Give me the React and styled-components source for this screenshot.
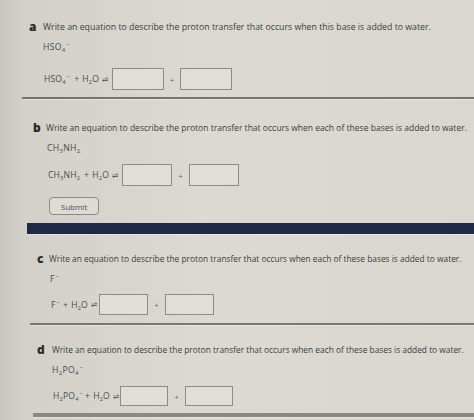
import React from "react";
import styled, { createGlobalStyle } from "styled-components";

const Global = createGlobalStyle`
  html, body { margin: 0; padding: 0; }
  body {
    width: 474px;
    height: 420px;
    overflow: hidden;
    background: linear-gradient(90deg, #c9c6c0 0px, #d3d0ca 22px, #dcd9d3 200px, #dad7d1 474px);
    font-family: "Open Sans", "Liberation Sans", sans-serif;
    color: #4b4a48;
  }
`;

const Page = styled.div`
  display: flex;
  flex-direction: column;
  padding-top: 20px;
`;

const Section = styled.section`
  display: flex;
  flex-direction: column;
  padding-left: ${(p) => p.$indent}px;
  margin-top: ${(p) => p.$top}px;
`;

const Header = styled.div`
  display: flex;
  align-items: center;
  gap: ${(p) => p.$gap}px;
  height: 14px;
`;

const Letter = styled.span`
  font-family: "Open Sans", "Liberation Sans", sans-serif;
  font-weight: 800;
  font-size: 12px;
  color: #2c2b2a;
  line-height: 14px;
  width: 8px;
`;

const Prompt = styled.span`
  font-size: ${(p) => p.$size}px;
  line-height: 14px;
  color: #3d3c3a;
  white-space: nowrap;
`;

const Formula = styled.div`
  font-size: 8.7px;
  letter-spacing: 0.3px;
  line-height: 14px;
  height: 14px;
  margin-top: 6px;
  padding-left: ${(p) => p.$shift}px;
  color: #4c4b48;
  sub { font-size: 6px; vertical-align: -2px; line-height: 0; }
  sup { font-size: 6px; vertical-align: 3px; line-height: 0; margin-left: 1px; }
`;

const EqRow = styled.div`
  display: flex;
  align-items: center;
  height: ${(p) => p.$h}px;
  margin-top: ${(p) => p.$top}px;
  padding-left: ${(p) => p.$shift}px;
  font-size: 8.6px;
  letter-spacing: 0.15px;
  color: #4c4b48;
  sub { font-size: 5.8px; vertical-align: -2px; line-height: 0; }
  sup { font-size: 5.8px; vertical-align: 3px; line-height: 0; margin-left: 1px; }
`;

const Lhs = styled.span`
  display: flex;
  align-items: center;
  white-space: nowrap;
  flex-shrink: 0;
  width: ${(p) => p.$w}px;
`;

const Op = styled.span`
  margin: 0 3px 0 ${(p) => p.$before}px;
`;

const Arrow = styled.span`
  font-family: "DejaVu Sans", sans-serif;
  font-size: 7.5px;
  letter-spacing: 0;
  margin-left: 3px;
`;

const AnswerBox = styled.div`
  width: ${(p) => p.$w}px;
  height: 100%;
  flex-shrink: 0;
  box-sizing: border-box;
  border: 1px solid #8e8c87;
  background: #e1ded9;
`;

const Plus = styled.span`
  font-size: 8px;
  width: ${(p) => p.$w}px;
  text-align: center;
  color: #6a6966;
`;

const SubmitButton = styled.button`
  margin-top: 11px;
  margin-left: 16px;
  width: 50px;
  height: 18px;
  border: 1px solid #8d8b87;
  border-radius: 4px;
  background: #dedbd5;
  font-family: "Open Sans", "Liberation Sans", sans-serif;
  font-size: 8px;
  color: #4f4e4b;
  padding: 0;
  align-self: flex-start;
`;

const Divider = styled.div`
  height: ${(p) => p.$h}px;
  margin-left: ${(p) => p.$left}px;
  margin-top: ${(p) => p.$top}px;
  background: ${(p) => p.$color};
  box-shadow: 0 1px 0 rgba(255,255,255,0.35);
`;

const Sub = ({ children }) => <sub>{children}</sub>;
const Sup = ({ children }) => <sup>{children}</sup>;

function Question({ letter, indent, gap, top, size, prompt, formula, shift, lhsW, opGap, eqTop, eqH, boxW, plusW, children }) {
  return (
    <Section $indent={indent} $top={top}>
      <Header $gap={gap}>
        <Letter>{letter}</Letter>
        <Prompt $size={size}>{prompt}</Prompt>
      </Header>
      <Formula $shift={shift}>{formula}</Formula>
      <EqRow $top={eqTop} $h={eqH} $shift={shift + 1}>
        <Lhs $w={lhsW}>
          <span>
            {formula}
            <Op $before={opGap}>+</Op>H<Sub>2</Sub>O
          </span>
          <Arrow>⇌</Arrow>
        </Lhs>
        <AnswerBox $w={boxW} />
        <Plus $w={plusW}>+</Plus>
        <AnswerBox $w={boxW} />
      </EqRow>
      {children}
    </Section>
  );
}

const single = "Write an equation to describe the proton transfer that occurs when this base is added to water.";
const many = "Write an equation to describe the proton transfer that occurs when each of these bases is added to water.";

export default function App() {
  return (
    <>
      <Global />
      <Page>
        <Question
          letter="a" indent={29} gap={6} top={0} size={8.75} prompt={single} shift={14}
          formula={<>HSO<Sub>4</Sub><Sup>−</Sup></>}
          lhsW={68} opGap={4} eqTop={14} eqH={22} boxW={52} plusW={16}
        />
        <Divider $h={2} $left={22} $top={7} $color="#77746f" />
        <Question
          letter="b" indent={33} gap={5} top={22} size={8.54} prompt={many} shift={14}
          formula={<>CH<Sub>3</Sub>NH<Sub>2</Sub></>}
          lhsW={74} opGap={4} eqTop={9} eqH={22} boxW={50} plusW={17}
        >
          <SubmitButton>Submit</SubmitButton>
        </Question>
        <Divider $h={11} $left={27} $top={8} $color="#1f2b45" />
        <Question
          letter="c" indent={37} gap={4} top={18} size={8.37} prompt={many} shift={13}
          formula={<>F<Sup>−</Sup></>}
          lhsW={48} opGap={3} eqTop={8} eqH={21} boxW={49} plusW={17}
        />
        <Divider $h={2} $left={30} $top={8} $color="#7a7772" />
        <Question
          letter="d" indent={37} gap={7} top={18} size={8.35} prompt={many} shift={15}
          formula={<>H<Sub>2</Sub>PO<Sub>4</Sub><Sup>−</Sup></>}
          lhsW={67} opGap={2} eqTop={9} eqH={20} boxW={48} plusW={17}
        />
        <Divider $h={4} $left={33} $top={7} $color="#8b8883" />
      </Page>
    </>
  );
}
